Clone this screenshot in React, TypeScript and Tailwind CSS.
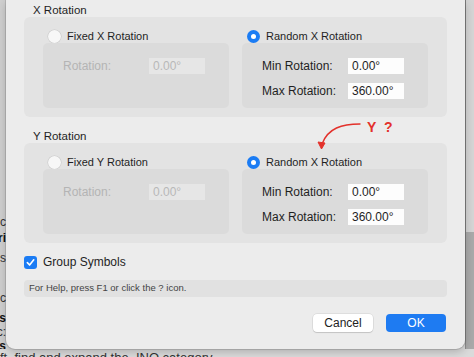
import React from 'react';

const font = { fontFamily: '"Liberation Sans", Arial, sans-serif' };

function Radio({ on }: { on: boolean }) {
  return on ? (
    <div className="w-[13px] h-[13px] rounded-full bg-[#1b7cf4] flex items-center justify-center">
      <div className="w-[5px] h-[5px] rounded-full bg-white" />
    </div>
  ) : (
    <div className="w-[13px] h-[13px] rounded-full bg-[#f7f7f7] shadow-[0_0_0_0.5px_rgba(0,0,0,0.12)]" />
  );
}

function Field({ label, value, disabled }: { label: string; value: string; disabled?: boolean }) {
  return (
    <div className="flex items-center h-[16px]">
      <span className={`w-[86px] text-[12px] ${disabled ? 'text-[#b4b4b4]' : 'text-[#1f1f1f]'}`}>{label}</span>
      <div
        className={`w-[56px] h-[16px] pl-[4px] flex items-center text-[12px] ${
          disabled ? 'bg-[#e6e6e6] text-[#b8b8b8]' : 'bg-[#fdfdfd] text-[#1f1f1f]'
        }`}
      >
        {value}
      </div>
    </div>
  );
}

function Option({ on, title, rows }: { on: boolean; title: string; rows: [string, string][] }) {
  return (
    <div className="flex flex-col">
      <div className="flex items-center h-[13px] pl-[5px] gap-[6px]">
        <Radio on={on} />
        <span className="text-[11px] text-[#1f1f1f]">{title}</span>
      </div>
      <div className="h-[65px] rounded-[5px] bg-[#dbdbdb] pl-[20px] pt-[15px] flex flex-col gap-[9px]">
        {rows.map(([l, v]) => (
          <Field key={l} label={l} value={v} disabled={!on} />
        ))}
      </div>
    </div>
  );
}

function Group({ axis }: { axis: string }) {
  return (
    <div className="h-[100px] rounded-[6px] bg-[#e3e3e3] pl-[19px] pr-[20px] pt-[13px] grid grid-cols-[186px_186px] gap-[13px]">
      <Option on={false} title={`Fixed ${axis} Rotation`} rows={[['Rotation:', '0.00°']]} />
      <Option
        on
        title="Random X Rotation"
        rows={[
          ['Min Rotation:', '0.00°'],
          ['Max Rotation:', '360.00°'],
        ]}
      />
    </div>
  );
}

export default function App() {
  return (
    <div className="w-[474px] h-[357px] overflow-hidden bg-[#d9d9d9] flex flex-col" style={font}>
      <div className="flex h-[349px] shrink-0">
        {/* background window peeking out on the left */}
        <div className="w-[6px] bg-[#cfcfcf] flex flex-col items-end overflow-hidden text-[12px] text-[#333] leading-[14px]">
          <div className="mt-[215px] whitespace-nowrap">ic</div>
          <div className="mt-[2px] whitespace-nowrap font-bold text-[#111]">ri</div>
          <div className="mt-[6px] whitespace-nowrap">s</div>
          <div className="mt-[26px] whitespace-nowrap">c</div>
          <div className="mt-[6px] whitespace-nowrap font-bold text-[#111]">cs</div>
          <div className="whitespace-nowrap">c:</div>
          <div className="whitespace-nowrap font-bold text-[#111]">s</div>
        </div>

        <div className="relative w-[459px] bg-[#ececec] rounded-b-[9px] shadow-[0_0_0_1px_rgba(0,0,0,0.12),0_3px_8px_rgba(0,0,0,0.2)] px-[18px] flex flex-col">
          <div className="pt-[4px] h-[17px] pl-[9px] text-[11.5px] leading-[13px] text-[#1f1f1f]">X Rotation</div>
          <Group axis="X" />
          <div className="mt-[12px] h-[14px] pl-[9px] text-[11.5px] leading-[14px] text-[#1f1f1f]">Y Rotation</div>
          <Group axis="Y" />

          <div className="mt-[12px] h-[14px] flex items-center gap-[6px]">
            <div className="w-[13px] h-[13px] rounded-[3px] bg-[#1b7cf4] flex items-center justify-center">
              <svg width="9" height="9" viewBox="0 0 10 10" fill="none">
                <path d="M1.5 5.2 L4 7.8 L8.6 2" stroke="white" strokeWidth="1.8" strokeLinecap="round" strokeLinejoin="round" />
              </svg>
            </div>
            <span className="text-[12px] text-[#1f1f1f]">Group Symbols</span>
          </div>

          <div className="mt-[11px] h-[17px] rounded-[4px] bg-[#e1e1e1] pl-[5px] flex items-center text-[9.5px] text-[#444]">
            For Help, press F1 or click the ? icon.
          </div>

          <div className="mt-[17px] flex justify-end gap-[13px] pr-[1px]">
            <div className="w-[60px] h-[18px] rounded-[4px] bg-white shadow-[0_0_0_0.5px_rgba(0,0,0,0.12),0_1px_1px_rgba(0,0,0,0.12)] flex items-center justify-center text-[12px] text-[#222]">
              Cancel
            </div>
            <div className="w-[60px] h-[18px] rounded-[4px] bg-[#1e7bf2] flex items-center justify-center text-[12px] text-white">
              OK
            </div>
          </div>

          {/* red annotation drawn on top of the screenshot */}
          <div className="absolute left-[361px] top-[117px] text-[14px] font-bold text-[#e3312b] tracking-[2px]">Y ?</div>
          <svg className="absolute left-[304px] top-[118px]" width="52" height="34" viewBox="0 0 52 34" fill="none">
            <path d="M50 6 C 32 6, 18 10, 12 26" stroke="#e3312b" strokeWidth="1.4" strokeLinecap="round" />
            <path d="M8 24 L11.5 31 L15 25 Z" fill="#e3312b" stroke="#e3312b" strokeWidth="1" strokeLinejoin="round" />
          </svg>
        </div>

        {/* background window peeking out on the right */}
        <div className="flex-1 flex flex-col border-l border-[#8c8c8c]">
          <div className="h-[232px] bg-[#d4d4d4]" />
          <div className="flex-1 bg-[#a9a9a9]" />
        </div>
      </div>
      <div className="flex-1 bg-[#dadada] flex">
        <div className="mt-[2px] text-[13px] leading-[14px] text-[#333] whitespace-nowrap">
          ft, find and expand the .INO category
        </div>
      </div>
    </div>
  );
}
